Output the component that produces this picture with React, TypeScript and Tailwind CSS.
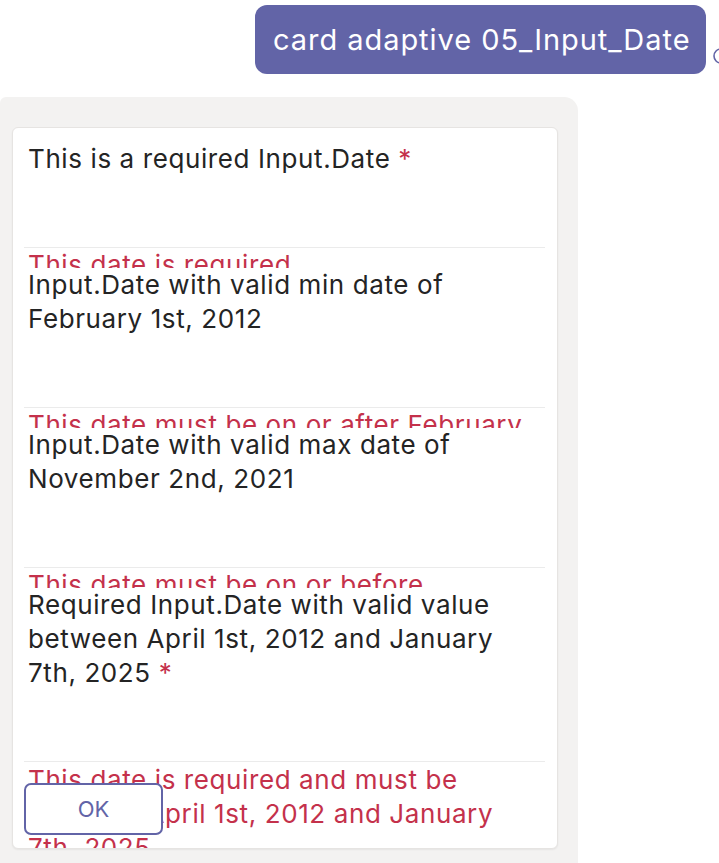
import React from 'react';

interface Field {
  label: string;
  required?: boolean;
  error: string;
  clip?: boolean;
}

const fields: Field[] = [
  { label: 'This is a required Input.Date', required: true, error: 'This date is required', clip: true },
  {
    label: 'Input.Date with valid min date of February 1st, 2012',
    error: 'This date must be on or after February 1st, 2012',
    clip: true,
  },
  {
    label: 'Input.Date with valid max date of November 2nd, 2021',
    error: 'This date must be on or before November 2nd, 2021',
    clip: true,
  },
  {
    label: 'Required Input.Date with valid value between April 1st, 2012 and January 7th, 2025',
    required: true,
    error: 'This date is required and must be between April 1st, 2012 and January 7th, 2025',
  },
];

function DateField({ field }: { field: Field }) {
  return (
    <div className="flex flex-col">
      <div className="text-[26px] leading-[34px] tracking-[0.6px] text-[#242424] pr-[30px]">
        {field.label}
        {field.required && <span className="text-[#c4314b]"> *</span>}
      </div>
      {/* empty date input, only its underline shows */}
      <div className="h-[72px] border-b border-[#ebebeb] mr-[12px] -ml-[4px]" />
      <div
        className={
          field.clip
            ? 'h-[20px] overflow-hidden text-[26px] leading-[34px] tracking-[0.6px] text-[#c4314b] pr-[30px]'
            : 'pt-[1px] text-[26px] leading-[34px] tracking-[0.6px] text-[#c4314b] pr-[30px]'
        }
      >
        {field.error}
      </div>
    </div>
  );
}

export default function App() {
  return (
    <div
      className="w-[719px] h-[863px] overflow-hidden bg-white relative"
      style={{ fontFamily: 'Inter, Roboto, "Noto Sans", sans-serif' }}
    >
      {/* sent message */}
      <div className="flex justify-end pt-[5px] pr-[13px]">
        <div className="h-[69px] w-[451px] rounded-[12px] bg-[#6264a7] flex items-center pl-[18px] text-white text-[29px] tracking-[0.95px]">
          card adaptive 05_Input_Date
        </div>
      </div>
      <svg className="absolute left-[711px] top-[47px]" width="16" height="18" viewBox="0 0 16 18">
        <circle cx="10" cy="9" r="7" fill="none" stroke="#6264a7" strokeWidth="1.6" />
      </svg>

      {/* incoming adaptive card */}
      <div className="mt-[23px] w-[578px] h-[800px] bg-[#f3f2f1] rounded-tl-[6px] rounded-tr-[14px] pt-[30px] pl-[12px] pr-[20px]">
        <div className="relative h-[722px] overflow-hidden bg-white rounded-[6px] border border-[#e6e4e2] shadow-[0_1px_2px_rgba(0,0,0,0.06)] pt-[14px] pl-[15px]">
          {fields.map((f) => (
            <DateField key={f.label} field={f} />
          ))}
          <button
            type="button"
            className="absolute left-[11px] top-[655px] w-[139px] h-[52px] bg-white border-2 border-[#6264a7] rounded-[7px] text-[22px] text-[#6264a7]"
          >
            OK
          </button>
        </div>
      </div>
    </div>
  );
}
